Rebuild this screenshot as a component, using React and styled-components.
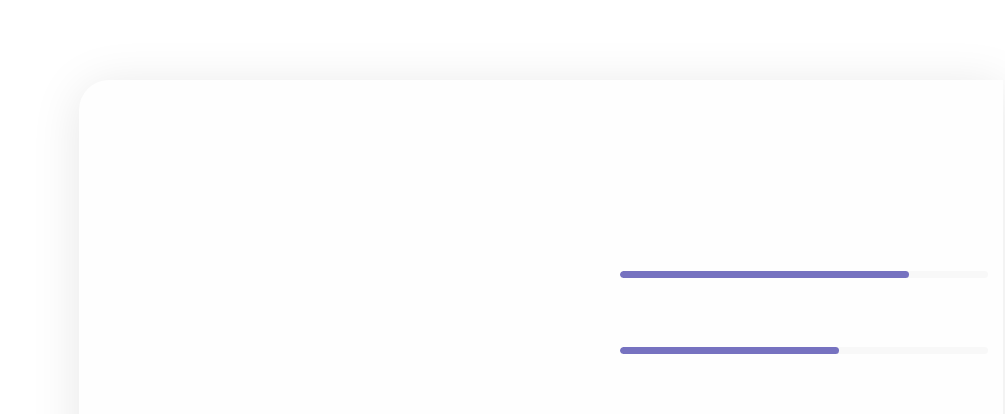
import React from 'react'
import styled, { createGlobalStyle } from 'styled-components'

const GlobalStyle = createGlobalStyle`
    html, body {
        margin: 0;
        padding: 0;
        background: #ffffff;
        font-family: "Open Sans", "Liberation Sans", sans-serif;
        overflow: hidden;
    }
`;

const Page = styled.div`
    height: 414px;
    padding: 80px 0 0 79px;
    box-sizing: border-box;
    overflow: hidden;
`;

const Card = styled.div`
    width: 924px;
    height: 420px;
    background: #fefefe;
    border-radius: 30px 0 0 0;
    box-shadow: 0 6px 50px rgba(0, 0, 0, 0.1);
    display: grid;
    grid-template-columns: 541px 368px;
    box-sizing: border-box;
`;

const LeftCol = styled.div``;

const Skills = styled.div`
    padding-top: 191px;
    display: flex;
    flex-direction: column;
    gap: 69px;
`;

const Track = styled.div`
    height: 7px;
    border-radius: 4px;
    background: #f8f8f8;
    overflow: hidden;
`;

const Fill = styled.div`
    height: 100%;
    border-radius: 4px;
    background: #7672c0;
`;

const skills = [
    { name: 'one', value: 78.5 },
    { name: 'two', value: 59.5 },
];

export default function App() {
    return (
        <>
            <GlobalStyle />
            <Page>
                <Card>
                    <LeftCol />
                    <Skills>
                        {skills.map(s => (
                            <Track key={s.name}>
                                <Fill style={{ width: `${s.value}%` }} />
                            </Track>
                        ))}
                    </Skills>
                </Card>
            </Page>
        </>
    )
}
